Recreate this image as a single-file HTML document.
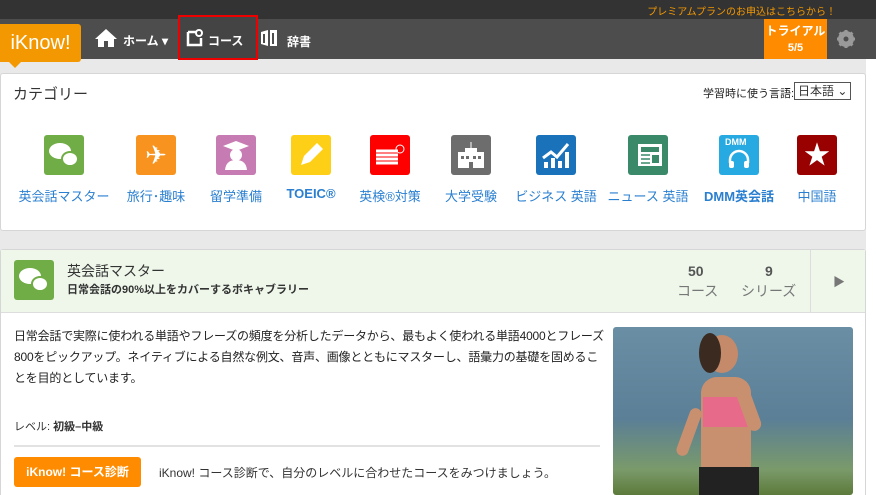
<!DOCTYPE html>
<html><head><meta charset="utf-8"><style>
*{box-sizing:border-box;margin:0;padding:0}
html,body{width:876px;height:495px;overflow:hidden}
body{background:#e9e9e9;font-family:"Liberation Sans","Noto Sans CJK JP",sans-serif;position:relative;color:#333}
.a{position:absolute}
.top{left:0;top:0;width:876px;height:19px;background:#333}
.nav{left:0;top:19px;width:876px;height:40px;background:#4d4d4d}
.navt{color:#fff;font-size:12px;font-weight:bold}
.cat{left:0;top:73px;width:866px;height:158px;background:#fff;border:1px solid #d6d6d6;border-radius:3px}
.ic{width:40px;height:40px;border-radius:3px}
.lb{font-size:13px;color:#2a7fd0;white-space:nowrap;transform:translateX(-50%)}
.crs{left:0;top:249px;width:866px;height:260px;background:#fff;border:1px solid #d6d6d6;border-radius:3px}
</style></head><body>
<div class="a top"></div>
<div class="a" style="right:40px;top:3px;font-size:10px;color:#f39800">プレミアムプランのお申込はこちらから！</div>
<div class="a nav"></div>
<div class="a" style="left:0;top:24px;width:81px;height:38px;background:#f39800;border-radius:0 3px 3px 0;color:#fff;font-size:20px;line-height:38px;text-align:center">iKnow!</div>
<div class="a" style="left:9px;top:62px;border-left:6px solid transparent;border-right:6px solid transparent;border-top:6px solid #f39800"></div>
<svg class="a" style="left:94px;top:28px" width="24" height="20" viewBox="0 0 24 20"><path d="M12 1 L23 11 H20 V19 H14 V13 H10 V19 H4 V11 H1 Z" fill="#fff"/></svg>
<div class="a navt" style="left:123px;top:32px">ホーム ▾</div>
<div class="a" style="left:178px;top:15px;width:80px;height:45px;border:2px solid #e00;background:#444"></div>
<svg class="a" style="left:186px;top:29px" width="18" height="18" viewBox="0 0 18 18"><path d="M2 3 H10 M2 3 V16 H15 V9" stroke="#fff" stroke-width="2.5" fill="none"/><circle cx="13" cy="4" r="3" fill="none" stroke="#fff" stroke-width="2"/></svg>
<div class="a navt" style="left:208px;top:32px">コース</div>
<svg class="a" style="left:260px;top:29px" width="18" height="18" viewBox="0 0 18 18"><path d="M1 3 L8 1 V17 L1 15 Z M10 1 H17 V17 H10 Z" fill="#fff"/><path d="M4 5 V14 M13 4 V15" stroke="#4d4d4d" stroke-width="2"/></svg>
<div class="a navt" style="left:287px;top:33px">辞書</div>
<div class="a" style="left:764px;top:19px;width:63px;height:40px;background:#ff8c00;color:#fff;font-size:12px;font-weight:bold;text-align:center;line-height:16px;padding-top:4px">トライアル<br><span style="font-size:11px">5/5</span></div>
<svg class="a" style="left:837px;top:30px" width="18" height="18" viewBox="0 0 18 18"><circle cx="9" cy="9" r="6" fill="none" stroke="#999" stroke-width="4"/><path d="M9 0 V18 M0 9 H18 M2.6 2.6 L15.4 15.4 M15.4 2.6 L2.6 15.4" stroke="#999" stroke-width="3"/><circle cx="9" cy="9" r="2.5" fill="#4d4d4d"/></svg>
<div class="a cat"></div>
<div class="a" style="left:13px;top:83px;font-size:15px;color:#333">カテゴリー</div>
<div class="a" style="left:703px;top:85px;font-size:11px;color:#222">学習時に使う言語:</div>
<div class="a" style="left:794px;top:82px;width:57px;height:18px;border:1px solid #555;font-size:12px;padding-left:3px;line-height:16px">日本語 ⌄</div>
<div class="a ic" style="left:44px;top:135px;background:#71ad47"></div>
<div class="a ic" style="left:136px;top:135px;background:#f7931e;color:#fff;font-size:26px;text-align:center;line-height:40px">✈</div>
<div class="a ic" style="left:216px;top:135px;background:#c77bb3"></div>
<svg class="a" style="left:222px;top:139px" width="28" height="32" viewBox="0 0 28 32"><path d="M14 2 L27 7 L14 12 L1 7 Z" fill="#fff"/><circle cx="14" cy="16" r="6" fill="#fff"/><path d="M3 31 Q4 21 14 21 Q24 21 25 31 Z" fill="#fff"/></svg>
<div class="a ic" style="left:291px;top:135px;background:#fdd017"></div>
<svg class="a" style="left:297px;top:141px" width="28" height="28" viewBox="0 0 28 28"><path d="M4 24 L7 15 L20 2 L26 8 L13 21 Z" fill="#fff"/></svg>
<div class="a ic" style="left:370px;top:135px;background:#f00"></div>
<svg class="a" style="left:374px;top:143px" width="32" height="24" viewBox="0 0 32 24"><path d="M2 8 H24 M2 12 H24 M2 16 H24 M2 20 H24" stroke="#fff" stroke-width="3"/><circle cx="26" cy="6" r="4" fill="none" stroke="#fff"/></svg>
<div class="a ic" style="left:451px;top:135px;background:#6d6d6d"></div>
<svg class="a" style="left:457px;top:140px" width="28" height="30" viewBox="0 0 28 30"><path d="M1 12 H27 V28 H1 Z M8 8 H20 V12 H8 Z" fill="#fff"/><path d="M14 2 V8" stroke="#fff"/><g fill="#6d6d6d"><rect x="4" y="16" width="3" height="3"/><rect x="9" y="16" width="3" height="3"/><rect x="16" y="16" width="3" height="3"/><rect x="21" y="16" width="3" height="3"/><rect x="12" y="22" width="4" height="6"/></g></svg>
<div class="a ic" style="left:536px;top:135px;background:#1a73ba"></div>
<svg class="a" style="left:541px;top:140px" width="30" height="30" viewBox="0 0 30 30"><path d="M2 18 L10 12 L16 17 L27 4" stroke="#fff" stroke-width="3" fill="none"/><path d="M3 28 V22 H7 V28 M10 28 V18 H14 V28 M17 28 V21 H21 V28 M24 28 V12 H28 V28" fill="#fff"/></svg>
<div class="a ic" style="left:628px;top:135px;background:#3a8a6a"></div>
<svg class="a" style="left:632px;top:141px" width="32" height="28" viewBox="0 0 32 28"><rect x="6" y="3" width="24" height="22" fill="#fff"/><rect x="9" y="6" width="18" height="5" fill="#3a8a6a"/><path d="M9 14 H18 M9 18 H18 M9 22 H18" stroke="#3a8a6a" stroke-width="1.5"/><rect x="20" y="14" width="7" height="8" fill="#3a8a6a"/></svg>
<div class="a ic" style="left:719px;top:135px;background:#27a9e1"></div>
<div class="a" style="left:725px;top:137px;font-size:9px;font-weight:bold;color:#fff">DMM</div>
<svg class="a" style="left:727px;top:149px" width="24" height="20" viewBox="0 0 24 20"><path d="M3 14 V11 A9 9 0 0 1 21 11 V14" stroke="#fff" stroke-width="2.5" fill="none"/><rect x="2" y="12" width="5" height="7" rx="2" fill="#fff"/><rect x="17" y="12" width="5" height="7" rx="2" fill="#fff"/></svg>
<div class="a ic" style="left:797px;top:135px;background:#990000;color:#fff;font-size:26px;text-align:center;line-height:40px">★</div>
<svg class="a" style="left:48px;top:141px" width="32" height="28" viewBox="0 0 32 28"><ellipse cx="12" cy="10" rx="11" ry="8" fill="#fff"/><ellipse cx="22" cy="18" rx="8" ry="7" fill="#fff" stroke="#71ad47" stroke-width="2"/></svg>
<div class="a lb" style="left:64px;top:186px">英会話マスター</div>
<div class="a lb" style="left:156px;top:186px">旅行･趣味</div>
<div class="a lb" style="left:236px;top:186px">留学準備</div>
<div class="a lb" style="left:311px;top:186px;font-weight:bold">TOEIC®</div>
<div class="a lb" style="left:390px;top:186px">英検®対策</div>
<div class="a lb" style="left:471px;top:186px">大学受験</div>
<div class="a lb" style="left:556px;top:186px">ビジネス 英語</div>
<div class="a lb" style="left:648px;top:186px">ニュース 英語</div>
<div class="a lb" style="left:739px;top:186px;font-weight:bold">DMM英会話</div>
<div class="a lb" style="left:817px;top:186px">中国語</div>
<div class="a crs"></div>
<div class="a" style="left:1px;top:250px;width:864px;height:63px;background:#eef7ea;border-bottom:1px solid #ddd"></div>
<div class="a" style="left:810px;top:250px;width:1px;height:63px;background:#ddd"></div>
<div class="a ic" style="left:14px;top:260px;background:#71ad47"></div>
<svg class="a" style="left:18px;top:266px" width="32" height="28" viewBox="0 0 32 28"><ellipse cx="12" cy="10" rx="11" ry="8" fill="#fff"/><ellipse cx="22" cy="18" rx="8" ry="7" fill="#fff" stroke="#71ad47" stroke-width="2"/></svg>
<div class="a" style="left:67px;top:261px;font-size:14px">英会話マスター</div>
<div class="a" style="left:67px;top:281px;font-size:11px;font-weight:bold">日常会話の90%以上をカバーするボキャブラリー</div>
<div class="a" style="left:688px;top:263px;font-size:14px;font-weight:bold;color:#555">50</div>
<div class="a" style="left:677px;top:281px;font-size:14px;color:#777">コース</div>
<div class="a" style="left:765px;top:263px;font-size:14px;font-weight:bold;color:#555">9</div>
<div class="a" style="left:741px;top:281px;font-size:14px;color:#777">シリーズ</div>
<div class="a" style="left:833px;top:273px;font-size:12px;color:#777">▶</div>
<div class="a" style="left:14px;top:326px;width:590px;font-size:12px;line-height:21px;color:#222;letter-spacing:-0.2px">日常会話で実際に使われる単語やフレーズの頻度を分析したデータから、最もよく使われる単語4000とフレーズ800をピックアップ。ネイティブによる自然な例文、音声、画像とともにマスターし、語彙力の基礎を固めることを目的としています。</div>
<div class="a" style="left:14px;top:418px;font-size:11px">レベル: <b>初級–中級</b></div>
<div class="a" style="left:14px;top:445px;width:586px;height:2px;background:#e2e2e2"></div>
<div class="a" style="left:14px;top:457px;width:127px;height:30px;background:#ff8c00;border-radius:3px;color:#fff;font-size:12px;font-weight:bold;line-height:30px;text-align:center">iKnow! コース診断</div>
<div class="a" style="left:159px;top:464px;font-size:12px">iKnow! コース診断で、自分のレベルに合わせたコースをみつけましょう。</div>
<div class="a" style="left:613px;top:327px;width:240px;height:168px;border-radius:3px;overflow:hidden;background:linear-gradient(180deg,#6a8fa5 0%,#5b7f96 55%,#7a9a6a 85%,#5c7a3a 100%)">
<div class="a" style="left:93px;top:8px;width:32px;height:38px;border-radius:50%;background:#c58a6a"></div>
<div class="a" style="left:86px;top:6px;width:22px;height:40px;border-radius:50%;background:#3a2a20"></div>
<div class="a" style="left:88px;top:50px;width:50px;height:120px;background:#c99070;border-radius:16px 16px 0 0"></div>
<div class="a" style="left:90px;top:70px;width:46px;height:30px;background:#e86a8a"></div>
<div class="a" style="left:86px;top:140px;width:60px;height:30px;background:#222"></div>
<div class="a" style="left:128px;top:55px;width:14px;height:50px;background:#c99070;border-radius:7px;transform:rotate(-20deg)"></div>
<div class="a" style="left:70px;top:80px;width:12px;height:50px;background:#c99070;border-radius:6px;transform:rotate(20deg)"></div>
</div>
<div class="a" style="left:866px;top:59px;width:10px;height:436px;background:#fff"></div>
</body></html>
